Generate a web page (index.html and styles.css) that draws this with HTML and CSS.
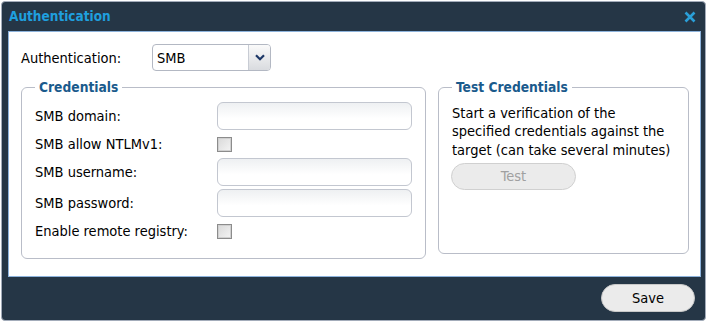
FILE: index.html
```html
<!DOCTYPE html>
<html>
<head>
<meta charset="utf-8">
<link rel="stylesheet" href="styles.css">
</head>
<body>
<div class="window">
  <div class="titlebar">
    <span class="title">Authentication</span>
    <svg class="close" width="12" height="12" viewBox="0 0 12 12"><path d="M1.5 1.5 L10.5 10.5 M10.5 1.5 L1.5 10.5" stroke="#2a9fd8" stroke-width="2.6" stroke-linecap="butt"/></svg>
  </div>
  <div class="content">
    <div class="auth-row">
      <span class="auth-label">Authentication:</span>
      <div class="select">
        <span class="select-value">SMB</span>
        <span class="select-arrow"><svg width="10" height="7" viewBox="0 0 10 7"><path d="M1 1.2 L5 5.2 L9 1.2" fill="none" stroke="#1d3767" stroke-width="2.2"/></svg></span>
      </div>
    </div>
    <div class="panels">
      <fieldset class="box creds">
        <legend>Credentials</legend>
        <div class="form">
          <label class="lbl">SMB domain:</label><div class="field"><div class="input"></div></div>
          <label class="lbl">SMB allow NTLMv1:</label><div class="field"><div class="check"></div></div>
          <label class="lbl">SMB username:</label><div class="field"><div class="input"></div></div>
          <label class="lbl">SMB password:</label><div class="field"><div class="input"></div></div>
          <label class="lbl">Enable remote registry:</label><div class="field"><div class="check"></div></div>
        </div>
      </fieldset>
      <fieldset class="box test">
        <legend>Test Credentials</legend>
        <p class="desc">Start a verification of the<br>specified credentials against the<br>target (can take several minutes)</p>
        <div class="btn disabled">Test</div>
      </fieldset>
    </div>
  </div>
  <div class="footer">
    <div class="btn save">Save</div>
  </div>
</div>
</body>
</html>
```
FILE: styles.css
```css
html, body {
  margin: 0;
  padding: 0;
  background: #ffffff;
}
body {
  padding: 1px;
  font-family: "DejaVu Sans Condensed", "DejaVu Sans", sans-serif;
  font-size: 14.5px;
  color: #000;
}
.window {
  box-sizing: border-box;
  width: 705px;
  height: 320px;
  border: 1px solid #a3acba;
  border-radius: 4px;
  background: #253646;
  display: flex;
  flex-direction: column;
}
.titlebar {
  height: 29px;
  display: flex;
  align-items: center;
  justify-content: space-between;
  padding: 0 9px 0 7px;
}
.title {
  font-weight: bold;
  font-size: 13.5px;
  color: #1f9fde;
  margin-top: -1px;
}
.close {
  margin-top: 0;
}
.content {
  margin: 0 4px 0 6px;
  background: #fff;
  border: 1px solid #8db3dc;
  height: 246px;
  padding: 12px 11px 0 12px;
  box-sizing: border-box;
}
.auth-row {
  display: flex;
  align-items: center;
  height: 27px;
}
.auth-label {
  width: 131px;
}
.select {
  box-sizing: border-box;
  width: 119px;
  height: 27px;
  border: 1px solid #b3b8c3;
  border-radius: 4px;
  display: flex;
  align-items: stretch;
  background: #fff;
}
.select-value {
  flex: 1;
  display: flex;
  align-items: center;
  padding-left: 4px;
}
.select-arrow {
  width: 21px;
  border-left: 1px solid #c8ccd4;
  border-radius: 0 3px 3px 0;
  background: linear-gradient(#fafafa, #d9dbdf);
  display: flex;
  align-items: center;
  justify-content: center;
}
.panels {
  display: flex;
  gap: 12px;
  align-items: flex-start;
  margin-top: 8px;
}
.box {
  margin: 0;
  border: 1px solid #b9bdc8;
  border-radius: 6px;
  padding: 0 13px 0 13px;
  box-sizing: border-box;
}
.box legend {
  padding: 0 4px;
  font-weight: bold;
  color: #1a5a8c;
  font-size: 13.7px;
}
.creds {
  width: 405px;
  height: 180px;
}
.test {
  width: 251px;
  height: 175px;
}
.form {
  display: grid;
  grid-template-columns: 182px 195px;
  grid-template-rows: 28px 22px 28px 28px 22px;
  row-gap: 3px;
  margin-top: 7px;
}
.lbl {
  display: flex;
  align-items: center;
}
.field {
  display: flex;
  align-items: center;
}
.input {
  box-sizing: border-box;
  width: 195px;
  height: 28px;
  border: 1px solid #c3c7d0;
  border-radius: 6px;
  background: linear-gradient(#eef0f2, #ffffff 60%);
}
.check {
  box-sizing: border-box;
  width: 15px;
  height: 15px;
  border: 1px solid #8c8c8c;
  box-shadow: inset 0 0 0 1px #d0d0d0;
  background: linear-gradient(135deg, #d9d9d9, #f4f4f4);
}
.desc {
  margin: 9px 0 0 0;
  line-height: 18.3px;
  white-space: nowrap;
}
.btn {
  box-sizing: border-box;
  display: flex;
  align-items: center;
  justify-content: center;
  border-radius: 14px;
  background: #ebebeb;
  border: 1px solid #d0d0d0;
}
.btn.disabled {
  width: 125px;
  height: 27px;
  margin-top: 4px;
  color: #a0a0a0;
  margin-left: -1px;
}
.footer {
  display: flex;
  justify-content: flex-end;
  padding: 7px 10px 0 0;
}
.btn.save {
  width: 94px;
  height: 28px;
  border-color: #c8c8c8;
}
```
